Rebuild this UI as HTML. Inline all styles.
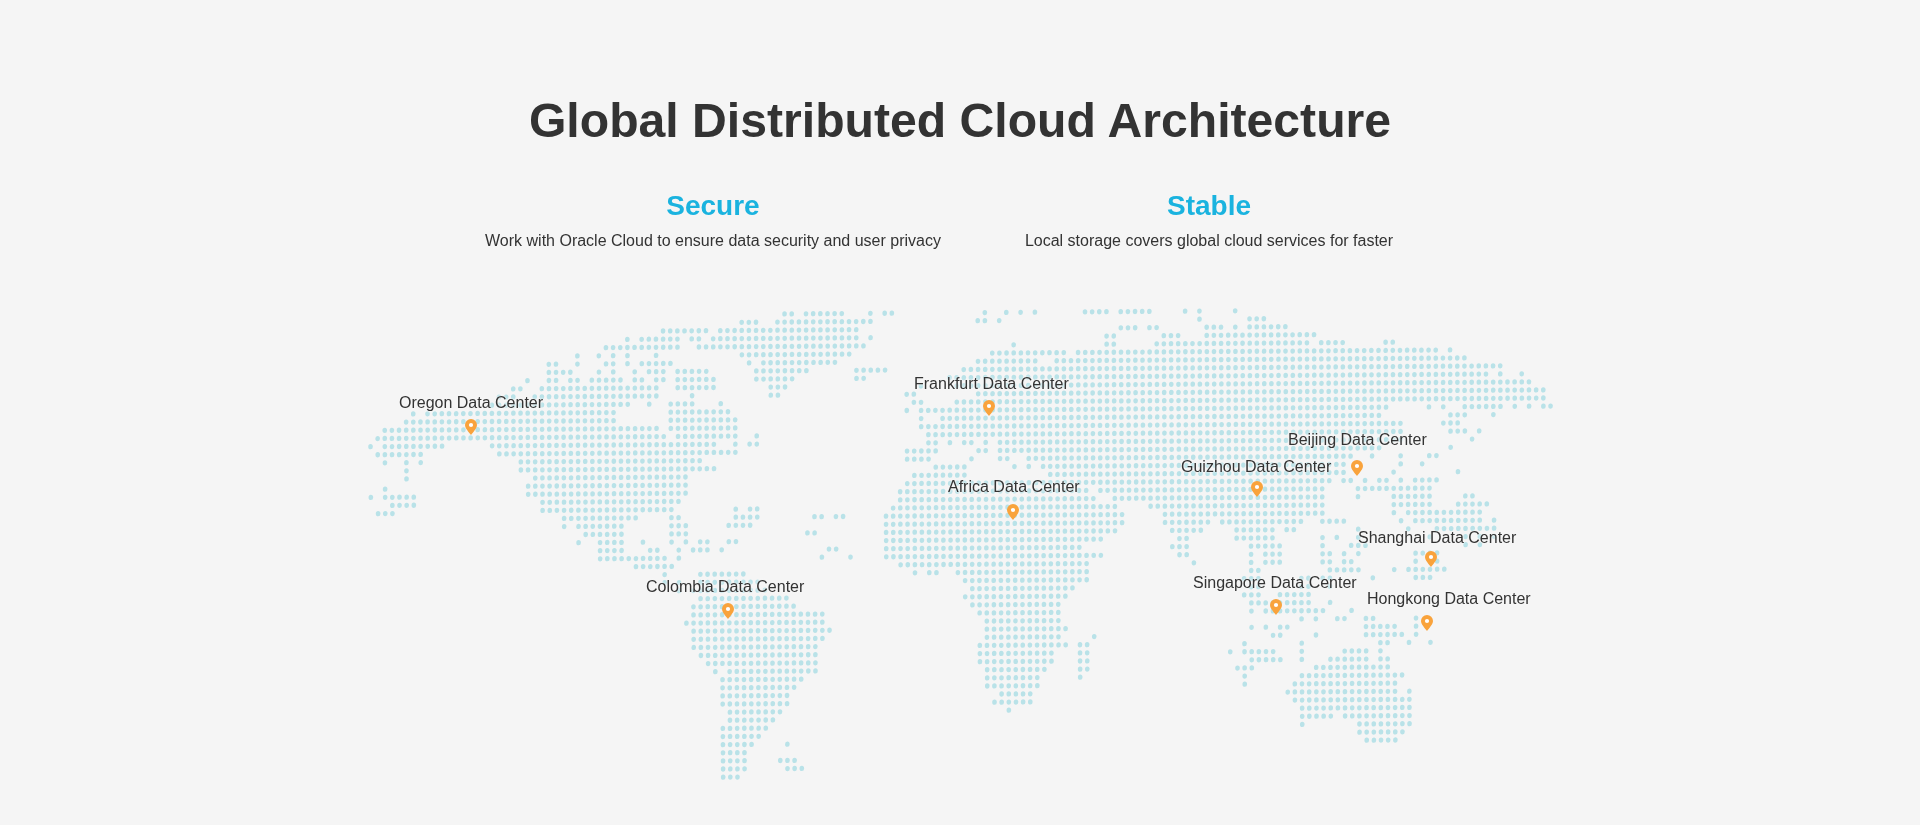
<!DOCTYPE html>
<html><head><meta charset="utf-8">
<style>
html,body{margin:0;padding:0;}
body{width:1920px;height:825px;background:#f5f5f5;position:relative;overflow:hidden;font-family:"Liberation Sans",sans-serif;}
h1{will-change:transform;position:absolute;left:0;width:1920px;top:90.2px;margin:0;text-align:center;font-size:48.15px;font-weight:bold;color:#333;line-height:60px;}
.sub{will-change:transform;position:absolute;text-align:center;width:600px;}
.sub h2{margin:0;font-size:28px;font-weight:bold;color:#1ab3df;line-height:34px;}
.sub p{margin:7px 0 0;font-size:16px;color:#333;line-height:22px;}
.map{position:absolute;left:0;top:0;}
.lbl{will-change:transform;position:absolute;font-size:16px;color:#333;white-space:nowrap;line-height:20px;text-shadow:0 0 2px #f5f5f5,0 0 3px #f5f5f5;}
.pin{position:absolute;}
</style></head><body>
<h1>Global Distributed Cloud Architecture</h1>
<div class="sub" style="left:413px;top:189px"><h2>Secure</h2><p>Work with Oracle Cloud to ensure data security and user privacy</p></div>
<div class="sub" style="left:909px;top:189px"><h2>Stable</h2><p>Local storage covers global cloud services for faster</p></div>
<svg class="map" width="1920" height="825" viewBox="0 0 1920 825"><g transform="matrix(7.1529 -0.0494 0.0525 8.1183 369.709 316.796)"><path d="M58 0h0M59 0h0M61 0h0M62 0h0M63 0h0M64 0h0M65 0h0M66 0h0M70 0h0M72 0h0M73 0h0M86 0h0M89 0h0M91 0h0M93 0h0M100 0h0M101 0h0M102 0h0M103 0h0M105 0h0M106 0h0M107 0h0M108 0h0M109 0h0M114 0h0M116 0h0M121 0h0M52 1h0M53 1h0M54 1h0M57 1h0M58 1h0M59 1h0M60 1h0M61 1h0M62 1h0M63 1h0M64 1h0M65 1h0M66 1h0M67 1h0M68 1h0M69 1h0M70 1h0M85 1h0M86 1h0M88 1h0M116 1h0M123 1h0M124 1h0M125 1h0M41 2h0M42 2h0M43 2h0M44 2h0M45 2h0M46 2h0M47 2h0M49 2h0M50 2h0M51 2h0M52 2h0M53 2h0M54 2h0M55 2h0M56 2h0M57 2h0M58 2h0M59 2h0M60 2h0M61 2h0M62 2h0M63 2h0M64 2h0M65 2h0M66 2h0M67 2h0M68 2h0M105 2h0M106 2h0M107 2h0M109 2h0M110 2h0M117 2h0M118 2h0M119 2h0M121 2h0M123 2h0M124 2h0M125 2h0M126 2h0M127 2h0M128 2h0M36 3h0M38 3h0M39 3h0M40 3h0M41 3h0M42 3h0M43 3h0M45 3h0M46 3h0M48 3h0M49 3h0M50 3h0M51 3h0M52 3h0M53 3h0M54 3h0M55 3h0M56 3h0M57 3h0M58 3h0M59 3h0M60 3h0M61 3h0M62 3h0M63 3h0M64 3h0M65 3h0M66 3h0M67 3h0M68 3h0M70 3h0M103 3h0M104 3h0M111 3h0M112 3h0M113 3h0M117 3h0M118 3h0M119 3h0M120 3h0M121 3h0M122 3h0M123 3h0M124 3h0M125 3h0M126 3h0M127 3h0M128 3h0M129 3h0M130 3h0M131 3h0M132 3h0M33 4h0M34 4h0M35 4h0M36 4h0M37 4h0M38 4h0M39 4h0M40 4h0M41 4h0M42 4h0M43 4h0M46 4h0M47 4h0M48 4h0M49 4h0M50 4h0M51 4h0M52 4h0M53 4h0M54 4h0M55 4h0M56 4h0M57 4h0M58 4h0M59 4h0M60 4h0M61 4h0M62 4h0M63 4h0M64 4h0M65 4h0M66 4h0M67 4h0M68 4h0M69 4h0M90 4h0M103 4h0M104 4h0M110 4h0M111 4h0M112 4h0M113 4h0M114 4h0M115 4h0M116 4h0M117 4h0M118 4h0M119 4h0M120 4h0M121 4h0M122 4h0M123 4h0M124 4h0M125 4h0M126 4h0M127 4h0M128 4h0M129 4h0M130 4h0M131 4h0M133 4h0M134 4h0M135 4h0M136 4h0M142 4h0M143 4h0M29 5h0M32 5h0M34 5h0M36 5h0M40 5h0M52 5h0M53 5h0M54 5h0M55 5h0M56 5h0M57 5h0M58 5h0M59 5h0M60 5h0M61 5h0M62 5h0M63 5h0M64 5h0M65 5h0M66 5h0M67 5h0M87 5h0M88 5h0M89 5h0M90 5h0M91 5h0M92 5h0M93 5h0M94 5h0M95 5h0M96 5h0M97 5h0M99 5h0M100 5h0M101 5h0M102 5h0M103 5h0M104 5h0M105 5h0M106 5h0M107 5h0M108 5h0M109 5h0M110 5h0M111 5h0M112 5h0M113 5h0M114 5h0M115 5h0M116 5h0M117 5h0M118 5h0M119 5h0M120 5h0M121 5h0M122 5h0M123 5h0M124 5h0M125 5h0M126 5h0M127 5h0M128 5h0M129 5h0M130 5h0M131 5h0M132 5h0M133 5h0M134 5h0M135 5h0M136 5h0M137 5h0M138 5h0M139 5h0M140 5h0M141 5h0M142 5h0M143 5h0M144 5h0M145 5h0M146 5h0M147 5h0M148 5h0M149 5h0M151 5h0M25 6h0M26 6h0M29 6h0M33 6h0M34 6h0M36 6h0M38 6h0M39 6h0M40 6h0M41 6h0M42 6h0M53 6h0M55 6h0M56 6h0M57 6h0M58 6h0M59 6h0M60 6h0M61 6h0M62 6h0M63 6h0M64 6h0M65 6h0M85 6h0M86 6h0M87 6h0M88 6h0M89 6h0M90 6h0M91 6h0M92 6h0M93 6h0M96 6h0M97 6h0M98 6h0M99 6h0M100 6h0M101 6h0M102 6h0M103 6h0M104 6h0M105 6h0M106 6h0M107 6h0M108 6h0M109 6h0M110 6h0M111 6h0M112 6h0M113 6h0M114 6h0M115 6h0M116 6h0M117 6h0M118 6h0M119 6h0M120 6h0M121 6h0M122 6h0M123 6h0M124 6h0M125 6h0M126 6h0M127 6h0M128 6h0M129 6h0M130 6h0M131 6h0M132 6h0M133 6h0M134 6h0M135 6h0M136 6h0M137 6h0M138 6h0M139 6h0M140 6h0M141 6h0M142 6h0M143 6h0M144 6h0M145 6h0M146 6h0M147 6h0M148 6h0M149 6h0M150 6h0M151 6h0M152 6h0M153 6h0M25 7h0M26 7h0M27 7h0M28 7h0M32 7h0M34 7h0M37 7h0M39 7h0M40 7h0M41 7h0M43 7h0M44 7h0M45 7h0M46 7h0M47 7h0M54 7h0M55 7h0M56 7h0M57 7h0M58 7h0M59 7h0M60 7h0M61 7h0M68 7h0M69 7h0M70 7h0M71 7h0M72 7h0M83 7h0M84 7h0M85 7h0M86 7h0M87 7h0M88 7h0M89 7h0M90 7h0M91 7h0M92 7h0M93 7h0M94 7h0M95 7h0M96 7h0M97 7h0M98 7h0M99 7h0M100 7h0M101 7h0M102 7h0M103 7h0M104 7h0M105 7h0M106 7h0M107 7h0M108 7h0M109 7h0M110 7h0M111 7h0M112 7h0M113 7h0M114 7h0M115 7h0M116 7h0M117 7h0M118 7h0M119 7h0M120 7h0M121 7h0M122 7h0M123 7h0M124 7h0M125 7h0M126 7h0M127 7h0M128 7h0M129 7h0M130 7h0M131 7h0M132 7h0M133 7h0M134 7h0M135 7h0M136 7h0M137 7h0M138 7h0M139 7h0M140 7h0M141 7h0M142 7h0M143 7h0M144 7h0M145 7h0M146 7h0M147 7h0M148 7h0M149 7h0M150 7h0M151 7h0M152 7h0M153 7h0M154 7h0M155 7h0M156 7h0M157 7h0M158 7h0M22 8h0M25 8h0M26 8h0M28 8h0M29 8h0M31 8h0M32 8h0M33 8h0M34 8h0M35 8h0M37 8h0M38 8h0M40 8h0M41 8h0M43 8h0M44 8h0M45 8h0M46 8h0M47 8h0M48 8h0M54 8h0M55 8h0M56 8h0M57 8h0M58 8h0M59 8h0M68 8h0M69 8h0M81 8h0M82 8h0M83 8h0M84 8h0M85 8h0M86 8h0M87 8h0M88 8h0M89 8h0M90 8h0M91 8h0M92 8h0M93 8h0M94 8h0M95 8h0M96 8h0M97 8h0M98 8h0M99 8h0M100 8h0M101 8h0M102 8h0M103 8h0M104 8h0M105 8h0M106 8h0M107 8h0M108 8h0M109 8h0M110 8h0M111 8h0M112 8h0M113 8h0M114 8h0M115 8h0M116 8h0M117 8h0M118 8h0M119 8h0M120 8h0M121 8h0M122 8h0M123 8h0M124 8h0M125 8h0M126 8h0M127 8h0M128 8h0M129 8h0M130 8h0M131 8h0M132 8h0M133 8h0M134 8h0M135 8h0M136 8h0M137 8h0M138 8h0M139 8h0M140 8h0M141 8h0M142 8h0M143 8h0M144 8h0M145 8h0M146 8h0M147 8h0M148 8h0M149 8h0M150 8h0M151 8h0M152 8h0M153 8h0M154 8h0M155 8h0M156 8h0M158 8h0M161 8h0M20 9h0M21 9h0M24 9h0M25 9h0M26 9h0M27 9h0M28 9h0M29 9h0M30 9h0M31 9h0M32 9h0M33 9h0M34 9h0M35 9h0M36 9h0M37 9h0M38 9h0M39 9h0M40 9h0M43 9h0M44 9h0M45 9h0M46 9h0M47 9h0M48 9h0M56 9h0M57 9h0M58 9h0M77 9h0M82 9h0M83 9h0M84 9h0M85 9h0M86 9h0M87 9h0M88 9h0M89 9h0M90 9h0M91 9h0M92 9h0M93 9h0M94 9h0M95 9h0M96 9h0M97 9h0M98 9h0M99 9h0M100 9h0M101 9h0M102 9h0M103 9h0M104 9h0M105 9h0M106 9h0M107 9h0M108 9h0M109 9h0M110 9h0M111 9h0M112 9h0M113 9h0M114 9h0M115 9h0M116 9h0M117 9h0M118 9h0M119 9h0M120 9h0M121 9h0M122 9h0M123 9h0M124 9h0M125 9h0M126 9h0M127 9h0M128 9h0M129 9h0M130 9h0M131 9h0M132 9h0M133 9h0M134 9h0M135 9h0M136 9h0M137 9h0M138 9h0M139 9h0M140 9h0M141 9h0M142 9h0M143 9h0M144 9h0M145 9h0M146 9h0M147 9h0M148 9h0M149 9h0M150 9h0M151 9h0M152 9h0M153 9h0M154 9h0M155 9h0M156 9h0M157 9h0M158 9h0M159 9h0M160 9h0M161 9h0M162 9h0M18 10h0M19 10h0M20 10h0M23 10h0M24 10h0M25 10h0M26 10h0M27 10h0M28 10h0M29 10h0M30 10h0M31 10h0M32 10h0M33 10h0M34 10h0M35 10h0M36 10h0M37 10h0M38 10h0M39 10h0M40 10h0M45 10h0M56 10h0M57 10h0M75 10h0M76 10h0M85 10h0M86 10h0M87 10h0M88 10h0M89 10h0M90 10h0M91 10h0M92 10h0M93 10h0M94 10h0M95 10h0M96 10h0M97 10h0M98 10h0M99 10h0M100 10h0M101 10h0M102 10h0M103 10h0M104 10h0M105 10h0M106 10h0M107 10h0M108 10h0M109 10h0M110 10h0M111 10h0M112 10h0M113 10h0M114 10h0M115 10h0M116 10h0M117 10h0M118 10h0M119 10h0M120 10h0M121 10h0M122 10h0M123 10h0M124 10h0M125 10h0M126 10h0M127 10h0M128 10h0M129 10h0M130 10h0M131 10h0M132 10h0M133 10h0M134 10h0M135 10h0M136 10h0M137 10h0M138 10h0M139 10h0M140 10h0M141 10h0M142 10h0M143 10h0M144 10h0M145 10h0M146 10h0M147 10h0M148 10h0M149 10h0M150 10h0M151 10h0M152 10h0M153 10h0M154 10h0M155 10h0M156 10h0M157 10h0M158 10h0M159 10h0M160 10h0M161 10h0M162 10h0M163 10h0M164 10h0M17 11h0M18 11h0M19 11h0M20 11h0M21 11h0M22 11h0M23 11h0M24 11h0M25 11h0M26 11h0M27 11h0M28 11h0M29 11h0M30 11h0M31 11h0M32 11h0M33 11h0M34 11h0M35 11h0M36 11h0M39 11h0M42 11h0M43 11h0M44 11h0M45 11h0M49 11h0M76 11h0M77 11h0M82 11h0M83 11h0M84 11h0M85 11h0M86 11h0M87 11h0M88 11h0M89 11h0M90 11h0M91 11h0M92 11h0M93 11h0M94 11h0M95 11h0M96 11h0M97 11h0M98 11h0M99 11h0M100 11h0M101 11h0M102 11h0M103 11h0M104 11h0M105 11h0M106 11h0M107 11h0M108 11h0M109 11h0M110 11h0M111 11h0M112 11h0M113 11h0M114 11h0M115 11h0M116 11h0M117 11h0M118 11h0M119 11h0M120 11h0M121 11h0M122 11h0M123 11h0M124 11h0M125 11h0M126 11h0M127 11h0M128 11h0M129 11h0M130 11h0M131 11h0M132 11h0M133 11h0M134 11h0M135 11h0M136 11h0M137 11h0M138 11h0M139 11h0M140 11h0M141 11h0M142 11h0M143 11h0M144 11h0M145 11h0M146 11h0M147 11h0M148 11h0M149 11h0M150 11h0M151 11h0M152 11h0M153 11h0M154 11h0M155 11h0M156 11h0M157 11h0M158 11h0M159 11h0M160 11h0M161 11h0M162 11h0M163 11h0M164 11h0M6 12h0M8 12h0M9 12h0M10 12h0M11 12h0M12 12h0M13 12h0M14 12h0M15 12h0M16 12h0M17 12h0M18 12h0M19 12h0M20 12h0M21 12h0M22 12h0M23 12h0M24 12h0M25 12h0M26 12h0M27 12h0M28 12h0M29 12h0M30 12h0M31 12h0M32 12h0M33 12h0M34 12h0M42 12h0M43 12h0M44 12h0M45 12h0M46 12h0M47 12h0M48 12h0M49 12h0M50 12h0M75 12h0M77 12h0M78 12h0M79 12h0M80 12h0M81 12h0M82 12h0M83 12h0M84 12h0M85 12h0M86 12h0M87 12h0M88 12h0M89 12h0M90 12h0M91 12h0M92 12h0M93 12h0M94 12h0M95 12h0M96 12h0M97 12h0M98 12h0M99 12h0M100 12h0M101 12h0M102 12h0M103 12h0M104 12h0M105 12h0M106 12h0M107 12h0M108 12h0M109 12h0M110 12h0M111 12h0M112 12h0M113 12h0M114 12h0M115 12h0M116 12h0M117 12h0M118 12h0M119 12h0M120 12h0M121 12h0M122 12h0M123 12h0M124 12h0M125 12h0M126 12h0M127 12h0M128 12h0M129 12h0M130 12h0M131 12h0M132 12h0M133 12h0M134 12h0M135 12h0M136 12h0M137 12h0M138 12h0M139 12h0M140 12h0M141 12h0M142 12h0M148 12h0M150 12h0M153 12h0M154 12h0M155 12h0M156 12h0M157 12h0M158 12h0M160 12h0M162 12h0M164 12h0M165 12h0M5 13h0M6 13h0M7 13h0M8 13h0M9 13h0M10 13h0M11 13h0M12 13h0M13 13h0M14 13h0M15 13h0M16 13h0M17 13h0M18 13h0M19 13h0M20 13h0M21 13h0M22 13h0M23 13h0M24 13h0M25 13h0M26 13h0M27 13h0M28 13h0M29 13h0M30 13h0M31 13h0M32 13h0M33 13h0M34 13h0M42 13h0M43 13h0M44 13h0M45 13h0M46 13h0M47 13h0M48 13h0M49 13h0M50 13h0M51 13h0M77 13h0M80 13h0M81 13h0M82 13h0M83 13h0M84 13h0M85 13h0M86 13h0M87 13h0M88 13h0M89 13h0M90 13h0M91 13h0M92 13h0M93 13h0M94 13h0M95 13h0M96 13h0M97 13h0M98 13h0M99 13h0M100 13h0M101 13h0M102 13h0M103 13h0M104 13h0M105 13h0M106 13h0M107 13h0M108 13h0M109 13h0M110 13h0M111 13h0M112 13h0M113 13h0M114 13h0M115 13h0M116 13h0M117 13h0M118 13h0M119 13h0M120 13h0M121 13h0M122 13h0M123 13h0M124 13h0M125 13h0M126 13h0M127 13h0M128 13h0M129 13h0M130 13h0M131 13h0M132 13h0M133 13h0M134 13h0M135 13h0M136 13h0M137 13h0M138 13h0M139 13h0M140 13h0M141 13h0M151 13h0M152 13h0M153 13h0M157 13h0M2 14h0M3 14h0M4 14h0M5 14h0M6 14h0M7 14h0M8 14h0M9 14h0M10 14h0M11 14h0M12 14h0M13 14h0M14 14h0M15 14h0M16 14h0M17 14h0M18 14h0M19 14h0M20 14h0M21 14h0M22 14h0M23 14h0M24 14h0M25 14h0M26 14h0M27 14h0M28 14h0M29 14h0M30 14h0M31 14h0M32 14h0M33 14h0M34 14h0M35 14h0M36 14h0M37 14h0M38 14h0M39 14h0M40 14h0M42 14h0M43 14h0M44 14h0M45 14h0M46 14h0M47 14h0M48 14h0M49 14h0M50 14h0M51 14h0M77 14h0M78 14h0M79 14h0M80 14h0M81 14h0M82 14h0M83 14h0M84 14h0M85 14h0M86 14h0M87 14h0M88 14h0M89 14h0M90 14h0M91 14h0M92 14h0M93 14h0M94 14h0M95 14h0M96 14h0M97 14h0M98 14h0M99 14h0M100 14h0M101 14h0M102 14h0M103 14h0M104 14h0M105 14h0M106 14h0M107 14h0M108 14h0M109 14h0M110 14h0M111 14h0M112 14h0M113 14h0M114 14h0M115 14h0M116 14h0M117 14h0M118 14h0M119 14h0M120 14h0M121 14h0M122 14h0M123 14h0M124 14h0M125 14h0M126 14h0M127 14h0M128 14h0M129 14h0M130 14h0M131 14h0M132 14h0M133 14h0M134 14h0M135 14h0M136 14h0M137 14h0M138 14h0M139 14h0M140 14h0M141 14h0M142 14h0M143 14h0M144 14h0M150 14h0M151 14h0M152 14h0M1 15h0M2 15h0M3 15h0M4 15h0M5 15h0M6 15h0M7 15h0M8 15h0M9 15h0M10 15h0M11 15h0M12 15h0M13 15h0M14 15h0M15 15h0M16 15h0M17 15h0M18 15h0M19 15h0M20 15h0M21 15h0M22 15h0M23 15h0M24 15h0M25 15h0M26 15h0M27 15h0M28 15h0M29 15h0M30 15h0M31 15h0M32 15h0M33 15h0M34 15h0M35 15h0M36 15h0M37 15h0M38 15h0M39 15h0M40 15h0M41 15h0M43 15h0M44 15h0M45 15h0M46 15h0M47 15h0M48 15h0M49 15h0M50 15h0M51 15h0M54 15h0M78 15h0M79 15h0M80 15h0M81 15h0M82 15h0M83 15h0M84 15h0M85 15h0M86 15h0M87 15h0M88 15h0M89 15h0M90 15h0M91 15h0M92 15h0M93 15h0M94 15h0M95 15h0M96 15h0M97 15h0M98 15h0M99 15h0M100 15h0M101 15h0M102 15h0M103 15h0M104 15h0M105 15h0M106 15h0M107 15h0M108 15h0M109 15h0M110 15h0M111 15h0M112 15h0M113 15h0M114 15h0M115 15h0M116 15h0M117 15h0M118 15h0M119 15h0M120 15h0M121 15h0M122 15h0M123 15h0M124 15h0M125 15h0M126 15h0M127 15h0M128 15h0M129 15h0M130 15h0M131 15h0M132 15h0M133 15h0M134 15h0M135 15h0M136 15h0M137 15h0M138 15h0M139 15h0M140 15h0M141 15h0M142 15h0M143 15h0M144 15h0M151 15h0M152 15h0M153 15h0M155 15h0M0 16h0M2 16h0M3 16h0M4 16h0M5 16h0M6 16h0M7 16h0M8 16h0M9 16h0M10 16h0M17 16h0M18 16h0M19 16h0M20 16h0M21 16h0M22 16h0M23 16h0M24 16h0M25 16h0M26 16h0M27 16h0M28 16h0M29 16h0M30 16h0M31 16h0M32 16h0M33 16h0M34 16h0M35 16h0M36 16h0M37 16h0M38 16h0M39 16h0M40 16h0M41 16h0M42 16h0M43 16h0M44 16h0M45 16h0M46 16h0M47 16h0M48 16h0M51 16h0M53 16h0M54 16h0M78 16h0M79 16h0M81 16h0M83 16h0M84 16h0M86 16h0M88 16h0M89 16h0M90 16h0M91 16h0M92 16h0M93 16h0M94 16h0M95 16h0M96 16h0M97 16h0M98 16h0M99 16h0M100 16h0M101 16h0M102 16h0M103 16h0M104 16h0M105 16h0M106 16h0M107 16h0M108 16h0M109 16h0M110 16h0M111 16h0M112 16h0M113 16h0M114 16h0M115 16h0M116 16h0M117 16h0M118 16h0M119 16h0M120 16h0M121 16h0M122 16h0M123 16h0M124 16h0M125 16h0M126 16h0M127 16h0M128 16h0M129 16h0M130 16h0M131 16h0M132 16h0M133 16h0M134 16h0M135 16h0M136 16h0M137 16h0M138 16h0M139 16h0M140 16h0M141 16h0M142 16h0M143 16h0M144 16h0M154 16h0M1 17h0M2 17h0M3 17h0M4 17h0M5 17h0M6 17h0M7 17h0M18 17h0M19 17h0M20 17h0M21 17h0M22 17h0M23 17h0M24 17h0M25 17h0M26 17h0M27 17h0M28 17h0M29 17h0M30 17h0M31 17h0M32 17h0M33 17h0M34 17h0M35 17h0M36 17h0M37 17h0M38 17h0M39 17h0M40 17h0M41 17h0M42 17h0M43 17h0M44 17h0M45 17h0M46 17h0M47 17h0M48 17h0M49 17h0M50 17h0M51 17h0M75 17h0M76 17h0M77 17h0M78 17h0M79 17h0M85 17h0M86 17h0M88 17h0M89 17h0M90 17h0M91 17h0M92 17h0M93 17h0M94 17h0M95 17h0M96 17h0M97 17h0M98 17h0M99 17h0M100 17h0M101 17h0M102 17h0M103 17h0M104 17h0M105 17h0M106 17h0M107 17h0M108 17h0M109 17h0M110 17h0M111 17h0M112 17h0M113 17h0M114 17h0M115 17h0M116 17h0M117 17h0M118 17h0M119 17h0M120 17h0M121 17h0M122 17h0M123 17h0M124 17h0M125 17h0M126 17h0M127 17h0M128 17h0M129 17h0M130 17h0M131 17h0M132 17h0M133 17h0M134 17h0M135 17h0M136 17h0M137 17h0M138 17h0M139 17h0M140 17h0M141 17h0M151 17h0M2 18h0M5 18h0M7 18h0M21 18h0M22 18h0M23 18h0M24 18h0M25 18h0M26 18h0M27 18h0M28 18h0M29 18h0M30 18h0M31 18h0M32 18h0M33 18h0M34 18h0M35 18h0M36 18h0M37 18h0M38 18h0M39 18h0M40 18h0M41 18h0M42 18h0M43 18h0M44 18h0M45 18h0M46 18h0M75 18h0M76 18h0M77 18h0M78 18h0M84 18h0M88 18h0M89 18h0M92 18h0M93 18h0M94 18h0M95 18h0M96 18h0M97 18h0M98 18h0M99 18h0M100 18h0M101 18h0M102 18h0M103 18h0M104 18h0M105 18h0M106 18h0M107 18h0M108 18h0M109 18h0M110 18h0M111 18h0M112 18h0M113 18h0M114 18h0M115 18h0M116 18h0M117 18h0M118 18h0M119 18h0M120 18h0M121 18h0M122 18h0M123 18h0M124 18h0M125 18h0M126 18h0M127 18h0M128 18h0M129 18h0M130 18h0M131 18h0M132 18h0M133 18h0M134 18h0M135 18h0M136 18h0M137 18h0M140 18h0M144 18h0M148 18h0M149 18h0M5 19h0M21 19h0M22 19h0M23 19h0M24 19h0M25 19h0M26 19h0M27 19h0M28 19h0M29 19h0M30 19h0M31 19h0M32 19h0M33 19h0M34 19h0M35 19h0M36 19h0M37 19h0M38 19h0M39 19h0M40 19h0M41 19h0M42 19h0M43 19h0M44 19h0M45 19h0M46 19h0M47 19h0M48 19h0M79 19h0M80 19h0M81 19h0M82 19h0M83 19h0M90 19h0M92 19h0M94 19h0M95 19h0M96 19h0M97 19h0M98 19h0M99 19h0M100 19h0M101 19h0M102 19h0M103 19h0M104 19h0M105 19h0M106 19h0M107 19h0M108 19h0M109 19h0M110 19h0M111 19h0M112 19h0M113 19h0M114 19h0M115 19h0M116 19h0M117 19h0M118 19h0M119 19h0M120 19h0M121 19h0M122 19h0M123 19h0M124 19h0M125 19h0M126 19h0M127 19h0M128 19h0M129 19h0M130 19h0M131 19h0M132 19h0M133 19h0M134 19h0M135 19h0M136 19h0M144 19h0M147 19h0M5 20h0M23 20h0M24 20h0M25 20h0M26 20h0M27 20h0M28 20h0M29 20h0M30 20h0M31 20h0M32 20h0M33 20h0M34 20h0M35 20h0M36 20h0M37 20h0M38 20h0M39 20h0M40 20h0M41 20h0M42 20h0M43 20h0M44 20h0M76 20h0M77 20h0M78 20h0M79 20h0M80 20h0M81 20h0M82 20h0M83 20h0M95 20h0M96 20h0M97 20h0M98 20h0M99 20h0M100 20h0M101 20h0M102 20h0M103 20h0M104 20h0M105 20h0M106 20h0M107 20h0M108 20h0M109 20h0M110 20h0M111 20h0M112 20h0M113 20h0M114 20h0M115 20h0M116 20h0M117 20h0M118 20h0M119 20h0M120 20h0M121 20h0M122 20h0M123 20h0M124 20h0M125 20h0M126 20h0M127 20h0M128 20h0M129 20h0M130 20h0M131 20h0M132 20h0M133 20h0M134 20h0M135 20h0M136 20h0M143 20h0M152 20h0M22 21h0M23 21h0M24 21h0M25 21h0M26 21h0M27 21h0M28 21h0M29 21h0M30 21h0M31 21h0M32 21h0M33 21h0M34 21h0M35 21h0M36 21h0M37 21h0M38 21h0M39 21h0M40 21h0M41 21h0M42 21h0M43 21h0M44 21h0M75 21h0M76 21h0M77 21h0M78 21h0M79 21h0M80 21h0M81 21h0M82 21h0M83 21h0M84 21h0M85 21h0M86 21h0M87 21h0M88 21h0M89 21h0M90 21h0M91 21h0M92 21h0M93 21h0M94 21h0M95 21h0M96 21h0M97 21h0M98 21h0M99 21h0M100 21h0M101 21h0M102 21h0M103 21h0M104 21h0M105 21h0M106 21h0M107 21h0M108 21h0M109 21h0M110 21h0M111 21h0M112 21h0M113 21h0M114 21h0M115 21h0M116 21h0M117 21h0M118 21h0M119 21h0M120 21h0M121 21h0M122 21h0M123 21h0M124 21h0M125 21h0M126 21h0M127 21h0M128 21h0M129 21h0M130 21h0M131 21h0M132 21h0M133 21h0M134 21h0M136 21h0M137 21h0M139 21h0M141 21h0M142 21h0M144 21h0M146 21h0M147 21h0M148 21h0M149 21h0M22 22h0M23 22h0M24 22h0M25 22h0M26 22h0M27 22h0M28 22h0M29 22h0M30 22h0M31 22h0M32 22h0M33 22h0M34 22h0M35 22h0M36 22h0M37 22h0M38 22h0M39 22h0M40 22h0M41 22h0M42 22h0M43 22h0M44 22h0M74 22h0M75 22h0M76 22h0M77 22h0M78 22h0M79 22h0M80 22h0M81 22h0M82 22h0M83 22h0M84 22h0M85 22h0M86 22h0M87 22h0M88 22h0M89 22h0M90 22h0M91 22h0M92 22h0M93 22h0M94 22h0M95 22h0M96 22h0M97 22h0M98 22h0M99 22h0M100 22h0M102 22h0M103 22h0M104 22h0M105 22h0M106 22h0M107 22h0M108 22h0M109 22h0M110 22h0M111 22h0M112 22h0M113 22h0M114 22h0M115 22h0M116 22h0M117 22h0M118 22h0M119 22h0M120 22h0M121 22h0M122 22h0M123 22h0M124 22h0M125 22h0M126 22h0M127 22h0M128 22h0M129 22h0M130 22h0M131 22h0M132 22h0M133 22h0M138 22h0M139 22h0M140 22h0M141 22h0M142 22h0M143 22h0M144 22h0M145 22h0M146 22h0M147 22h0M148 22h0M24 23h0M25 23h0M26 23h0M27 23h0M28 23h0M29 23h0M30 23h0M31 23h0M32 23h0M33 23h0M34 23h0M35 23h0M36 23h0M37 23h0M38 23h0M39 23h0M40 23h0M41 23h0M42 23h0M43 23h0M74 23h0M75 23h0M76 23h0M77 23h0M78 23h0M79 23h0M80 23h0M81 23h0M82 23h0M83 23h0M84 23h0M85 23h0M86 23h0M87 23h0M88 23h0M89 23h0M90 23h0M91 23h0M92 23h0M93 23h0M94 23h0M95 23h0M96 23h0M97 23h0M98 23h0M99 23h0M100 23h0M101 23h0M104 23h0M105 23h0M106 23h0M107 23h0M108 23h0M109 23h0M110 23h0M111 23h0M112 23h0M113 23h0M114 23h0M115 23h0M116 23h0M117 23h0M118 23h0M119 23h0M120 23h0M121 23h0M122 23h0M123 23h0M124 23h0M125 23h0M126 23h0M127 23h0M128 23h0M129 23h0M130 23h0M131 23h0M132 23h0M133 23h0M138 23h0M143 23h0M144 23h0M145 23h0M146 23h0M147 23h0M148 23h0M153 23h0M154 23h0M24 24h0M25 24h0M26 24h0M27 24h0M28 24h0M29 24h0M30 24h0M31 24h0M32 24h0M33 24h0M34 24h0M35 24h0M36 24h0M37 24h0M38 24h0M39 24h0M40 24h0M41 24h0M42 24h0M51 24h0M53 24h0M54 24h0M73 24h0M74 24h0M75 24h0M76 24h0M77 24h0M78 24h0M79 24h0M80 24h0M81 24h0M82 24h0M83 24h0M84 24h0M85 24h0M86 24h0M87 24h0M88 24h0M89 24h0M90 24h0M91 24h0M92 24h0M93 24h0M94 24h0M95 24h0M96 24h0M97 24h0M98 24h0M99 24h0M100 24h0M101 24h0M102 24h0M103 24h0M104 24h0M109 24h0M110 24h0M111 24h0M112 24h0M113 24h0M114 24h0M115 24h0M116 24h0M117 24h0M118 24h0M119 24h0M120 24h0M121 24h0M122 24h0M123 24h0M124 24h0M125 24h0M126 24h0M127 24h0M128 24h0M129 24h0M130 24h0M131 24h0M132 24h0M133 24h0M143 24h0M144 24h0M145 24h0M146 24h0M147 24h0M148 24h0M152 24h0M153 24h0M154 24h0M155 24h0M156 24h0M27 25h0M28 25h0M29 25h0M30 25h0M31 25h0M32 25h0M33 25h0M34 25h0M35 25h0M36 25h0M37 25h0M42 25h0M43 25h0M51 25h0M52 25h0M53 25h0M54 25h0M62 25h0M63 25h0M65 25h0M66 25h0M72 25h0M73 25h0M74 25h0M75 25h0M76 25h0M77 25h0M78 25h0M79 25h0M80 25h0M81 25h0M82 25h0M83 25h0M84 25h0M85 25h0M86 25h0M87 25h0M88 25h0M89 25h0M90 25h0M91 25h0M92 25h0M93 25h0M94 25h0M95 25h0M96 25h0M97 25h0M98 25h0M99 25h0M100 25h0M101 25h0M102 25h0M103 25h0M104 25h0M105 25h0M111 25h0M112 25h0M113 25h0M114 25h0M115 25h0M116 25h0M117 25h0M118 25h0M119 25h0M120 25h0M121 25h0M122 25h0M123 25h0M124 25h0M125 25h0M126 25h0M127 25h0M128 25h0M129 25h0M130 25h0M131 25h0M132 25h0M133 25h0M143 25h0M145 25h0M146 25h0M147 25h0M148 25h0M149 25h0M150 25h0M151 25h0M152 25h0M153 25h0M154 25h0M155 25h0M27 26h0M29 26h0M30 26h0M31 26h0M32 26h0M33 26h0M34 26h0M35 26h0M42 26h0M43 26h0M44 26h0M50 26h0M51 26h0M52 26h0M53 26h0M72 26h0M73 26h0M74 26h0M75 26h0M76 26h0M77 26h0M78 26h0M79 26h0M80 26h0M81 26h0M82 26h0M83 26h0M84 26h0M85 26h0M86 26h0M87 26h0M88 26h0M89 26h0M90 26h0M91 26h0M92 26h0M93 26h0M94 26h0M95 26h0M96 26h0M97 26h0M98 26h0M99 26h0M100 26h0M101 26h0M102 26h0M103 26h0M104 26h0M105 26h0M111 26h0M112 26h0M113 26h0M114 26h0M115 26h0M116 26h0M117 26h0M119 26h0M120 26h0M121 26h0M122 26h0M123 26h0M124 26h0M125 26h0M126 26h0M127 26h0M128 26h0M129 26h0M130 26h0M133 26h0M134 26h0M135 26h0M136 26h0M144 26h0M146 26h0M147 26h0M148 26h0M149 26h0M150 26h0M151 26h0M152 26h0M153 26h0M154 26h0M155 26h0M157 26h0M30 27h0M31 27h0M32 27h0M33 27h0M34 27h0M35 27h0M42 27h0M43 27h0M44 27h0M61 27h0M62 27h0M72 27h0M73 27h0M74 27h0M75 27h0M76 27h0M77 27h0M78 27h0M79 27h0M80 27h0M81 27h0M82 27h0M83 27h0M84 27h0M85 27h0M86 27h0M87 27h0M88 27h0M89 27h0M90 27h0M91 27h0M92 27h0M93 27h0M94 27h0M95 27h0M96 27h0M97 27h0M98 27h0M99 27h0M100 27h0M101 27h0M102 27h0M103 27h0M104 27h0M112 27h0M113 27h0M114 27h0M115 27h0M116 27h0M121 27h0M122 27h0M123 27h0M124 27h0M125 27h0M126 27h0M128 27h0M129 27h0M138 27h0M145 27h0M149 27h0M150 27h0M151 27h0M152 27h0M153 27h0M154 27h0M155 27h0M156 27h0M157 27h0M29 28h0M32 28h0M33 28h0M34 28h0M35 28h0M38 28h0M42 28h0M44 28h0M46 28h0M47 28h0M50 28h0M51 28h0M72 28h0M73 28h0M74 28h0M75 28h0M76 28h0M77 28h0M78 28h0M79 28h0M80 28h0M81 28h0M82 28h0M83 28h0M84 28h0M85 28h0M86 28h0M87 28h0M88 28h0M89 28h0M90 28h0M91 28h0M92 28h0M93 28h0M94 28h0M95 28h0M96 28h0M97 28h0M98 28h0M99 28h0M100 28h0M101 28h0M102 28h0M113 28h0M114 28h0M121 28h0M122 28h0M123 28h0M124 28h0M125 28h0M126 28h0M133 28h0M135 28h0M138 28h0M148 28h0M153 28h0M155 28h0M157 28h0M32 29h0M33 29h0M34 29h0M35 29h0M39 29h0M40 29h0M43 29h0M45 29h0M46 29h0M47 29h0M49 29h0M64 29h0M65 29h0M72 29h0M73 29h0M74 29h0M75 29h0M76 29h0M77 29h0M78 29h0M79 29h0M80 29h0M81 29h0M82 29h0M83 29h0M84 29h0M85 29h0M86 29h0M87 29h0M88 29h0M89 29h0M90 29h0M91 29h0M92 29h0M93 29h0M94 29h0M95 29h0M96 29h0M97 29h0M98 29h0M99 29h0M112 29h0M113 29h0M114 29h0M123 29h0M124 29h0M125 29h0M126 29h0M127 29h0M133 29h0M137 29h0M138 29h0M139 29h0M153 29h0M155 29h0M32 30h0M33 30h0M34 30h0M35 30h0M36 30h0M37 30h0M38 30h0M39 30h0M40 30h0M41 30h0M43 30h0M63 30h0M67 30h0M72 30h0M73 30h0M74 30h0M75 30h0M76 30h0M77 30h0M78 30h0M79 30h0M80 30h0M81 30h0M82 30h0M83 30h0M84 30h0M85 30h0M86 30h0M87 30h0M88 30h0M89 30h0M90 30h0M91 30h0M92 30h0M93 30h0M94 30h0M95 30h0M96 30h0M97 30h0M98 30h0M99 30h0M100 30h0M101 30h0M102 30h0M113 30h0M114 30h0M123 30h0M125 30h0M126 30h0M127 30h0M133 30h0M134 30h0M136 30h0M138 30h0M146 30h0M147 30h0M148 30h0M149 30h0M37 31h0M38 31h0M39 31h0M40 31h0M41 31h0M42 31h0M74 31h0M75 31h0M76 31h0M77 31h0M78 31h0M79 31h0M80 31h0M81 31h0M82 31h0M83 31h0M84 31h0M85 31h0M86 31h0M87 31h0M88 31h0M89 31h0M90 31h0M91 31h0M92 31h0M93 31h0M94 31h0M95 31h0M96 31h0M97 31h0M98 31h0M99 31h0M100 31h0M115 31h0M123 31h0M125 31h0M126 31h0M127 31h0M133 31h0M134 31h0M136 31h0M137 31h0M146 31h0M148 31h0M149 31h0M41 32h0M46 32h0M47 32h0M48 32h0M49 32h0M50 32h0M51 32h0M52 32h0M76 32h0M78 32h0M79 32h0M82 32h0M83 32h0M84 32h0M85 32h0M86 32h0M87 32h0M88 32h0M89 32h0M90 32h0M91 32h0M92 32h0M93 32h0M94 32h0M95 32h0M96 32h0M97 32h0M98 32h0M99 32h0M100 32h0M123 32h0M124 32h0M134 32h0M135 32h0M136 32h0M137 32h0M138 32h0M143 32h0M145 32h0M146 32h0M147 32h0M148 32h0M149 32h0M150 32h0M41 33h0M43 33h0M46 33h0M47 33h0M48 33h0M49 33h0M50 33h0M51 33h0M52 33h0M53 33h0M54 33h0M83 33h0M84 33h0M85 33h0M86 33h0M87 33h0M88 33h0M89 33h0M90 33h0M91 33h0M92 33h0M93 33h0M94 33h0M95 33h0M96 33h0M97 33h0M98 33h0M99 33h0M100 33h0M122 33h0M123 33h0M124 33h0M130 33h0M131 33h0M133 33h0M134 33h0M140 33h0M146 33h0M147 33h0M148 33h0M43 34h0M45 34h0M46 34h0M47 34h0M48 34h0M49 34h0M50 34h0M51 34h0M52 34h0M53 34h0M54 34h0M55 34h0M84 34h0M85 34h0M86 34h0M87 34h0M88 34h0M89 34h0M90 34h0M91 34h0M92 34h0M93 34h0M94 34h0M95 34h0M96 34h0M97 34h0M98 34h0M123 34h0M124 34h0M130 34h0M131 34h0M134 34h0M46 35h0M47 35h0M48 35h0M49 35h0M50 35h0M51 35h0M52 35h0M53 35h0M54 35h0M55 35h0M56 35h0M57 35h0M58 35h0M83 35h0M84 35h0M85 35h0M86 35h0M87 35h0M88 35h0M89 35h0M90 35h0M91 35h0M92 35h0M93 35h0M94 35h0M95 35h0M96 35h0M97 35h0M122 35h0M123 35h0M124 35h0M127 35h0M128 35h0M129 35h0M130 35h0M131 35h0M45 36h0M46 36h0M47 36h0M48 36h0M49 36h0M50 36h0M51 36h0M52 36h0M53 36h0M54 36h0M55 36h0M56 36h0M57 36h0M58 36h0M59 36h0M84 36h0M85 36h0M86 36h0M87 36h0M88 36h0M89 36h0M90 36h0M91 36h0M92 36h0M93 36h0M94 36h0M95 36h0M96 36h0M123 36h0M124 36h0M125 36h0M126 36h0M127 36h0M128 36h0M129 36h0M130 36h0M131 36h0M134 36h0M45 37h0M46 37h0M47 37h0M48 37h0M49 37h0M50 37h0M51 37h0M52 37h0M53 37h0M54 37h0M55 37h0M56 37h0M57 37h0M58 37h0M59 37h0M60 37h0M61 37h0M62 37h0M63 37h0M85 37h0M86 37h0M87 37h0M88 37h0M89 37h0M90 37h0M91 37h0M92 37h0M93 37h0M94 37h0M95 37h0M96 37h0M123 37h0M125 37h0M126 37h0M127 37h0M128 37h0M129 37h0M130 37h0M131 37h0M132 37h0M133 37h0M137 37h0M44 38h0M45 38h0M46 38h0M47 38h0M48 38h0M49 38h0M50 38h0M51 38h0M52 38h0M53 38h0M54 38h0M55 38h0M56 38h0M57 38h0M58 38h0M59 38h0M60 38h0M61 38h0M62 38h0M63 38h0M86 38h0M87 38h0M88 38h0M89 38h0M90 38h0M91 38h0M92 38h0M93 38h0M94 38h0M95 38h0M96 38h0M130 38h0M132 38h0M135 38h0M136 38h0M139 38h0M140 38h0M146 38h0M45 39h0M46 39h0M47 39h0M48 39h0M49 39h0M50 39h0M51 39h0M52 39h0M53 39h0M54 39h0M55 39h0M56 39h0M57 39h0M58 39h0M59 39h0M60 39h0M61 39h0M62 39h0M63 39h0M64 39h0M86 39h0M87 39h0M88 39h0M89 39h0M90 39h0M91 39h0M92 39h0M93 39h0M94 39h0M95 39h0M96 39h0M97 39h0M123 39h0M125 39h0M127 39h0M128 39h0M139 39h0M140 39h0M141 39h0M142 39h0M143 39h0M146 39h0M45 40h0M46 40h0M47 40h0M48 40h0M49 40h0M50 40h0M51 40h0M52 40h0M53 40h0M54 40h0M55 40h0M56 40h0M57 40h0M58 40h0M59 40h0M60 40h0M61 40h0M62 40h0M63 40h0M86 40h0M87 40h0M88 40h0M89 40h0M90 40h0M91 40h0M92 40h0M93 40h0M94 40h0M95 40h0M96 40h0M101 40h0M126 40h0M127 40h0M132 40h0M139 40h0M140 40h0M141 40h0M142 40h0M143 40h0M144 40h0M146 40h0M45 41h0M46 41h0M47 41h0M48 41h0M49 41h0M50 41h0M51 41h0M52 41h0M53 41h0M54 41h0M55 41h0M56 41h0M57 41h0M58 41h0M59 41h0M60 41h0M61 41h0M62 41h0M85 41h0M86 41h0M87 41h0M88 41h0M89 41h0M90 41h0M91 41h0M92 41h0M93 41h0M94 41h0M95 41h0M96 41h0M97 41h0M99 41h0M100 41h0M122 41h0M130 41h0M141 41h0M142 41h0M145 41h0M148 41h0M46 42h0M47 42h0M48 42h0M49 42h0M50 42h0M51 42h0M52 42h0M53 42h0M54 42h0M55 42h0M56 42h0M57 42h0M58 42h0M59 42h0M60 42h0M61 42h0M62 42h0M85 42h0M86 42h0M87 42h0M88 42h0M89 42h0M90 42h0M91 42h0M92 42h0M93 42h0M94 42h0M95 42h0M99 42h0M100 42h0M120 42h0M122 42h0M123 42h0M124 42h0M125 42h0M126 42h0M130 42h0M136 42h0M137 42h0M138 42h0M139 42h0M141 42h0M47 43h0M48 43h0M49 43h0M50 43h0M51 43h0M52 43h0M53 43h0M54 43h0M55 43h0M56 43h0M57 43h0M58 43h0M59 43h0M60 43h0M61 43h0M62 43h0M85 43h0M86 43h0M87 43h0M88 43h0M89 43h0M90 43h0M91 43h0M92 43h0M93 43h0M94 43h0M95 43h0M99 43h0M100 43h0M123 43h0M124 43h0M125 43h0M126 43h0M127 43h0M130 43h0M134 43h0M135 43h0M136 43h0M137 43h0M138 43h0M139 43h0M141 43h0M142 43h0M48 44h0M50 44h0M51 44h0M52 44h0M53 44h0M54 44h0M55 44h0M56 44h0M57 44h0M58 44h0M59 44h0M60 44h0M61 44h0M62 44h0M86 44h0M87 44h0M88 44h0M89 44h0M90 44h0M91 44h0M92 44h0M93 44h0M94 44h0M99 44h0M100 44h0M121 44h0M122 44h0M123 44h0M132 44h0M133 44h0M134 44h0M135 44h0M136 44h0M137 44h0M138 44h0M139 44h0M140 44h0M141 44h0M142 44h0M49 45h0M50 45h0M51 45h0M52 45h0M53 45h0M54 45h0M55 45h0M56 45h0M57 45h0M58 45h0M59 45h0M60 45h0M86 45h0M87 45h0M88 45h0M89 45h0M90 45h0M91 45h0M92 45h0M93 45h0M99 45h0M122 45h0M130 45h0M131 45h0M132 45h0M133 45h0M134 45h0M135 45h0M136 45h0M137 45h0M138 45h0M139 45h0M140 45h0M141 45h0M142 45h0M143 45h0M144 45h0M49 46h0M50 46h0M51 46h0M52 46h0M53 46h0M54 46h0M55 46h0M56 46h0M57 46h0M58 46h0M59 46h0M86 46h0M87 46h0M88 46h0M89 46h0M90 46h0M91 46h0M92 46h0M93 46h0M122 46h0M129 46h0M130 46h0M131 46h0M132 46h0M133 46h0M134 46h0M135 46h0M136 46h0M137 46h0M138 46h0M139 46h0M140 46h0M141 46h0M142 46h0M143 46h0M49 47h0M50 47h0M51 47h0M52 47h0M53 47h0M54 47h0M55 47h0M56 47h0M57 47h0M58 47h0M88 47h0M89 47h0M90 47h0M91 47h0M92 47h0M128 47h0M129 47h0M130 47h0M131 47h0M132 47h0M133 47h0M134 47h0M135 47h0M136 47h0M137 47h0M138 47h0M139 47h0M140 47h0M141 47h0M142 47h0M143 47h0M145 47h0M49 48h0M50 48h0M51 48h0M52 48h0M53 48h0M54 48h0M55 48h0M56 48h0M57 48h0M58 48h0M87 48h0M88 48h0M89 48h0M90 48h0M91 48h0M92 48h0M129 48h0M130 48h0M131 48h0M132 48h0M133 48h0M134 48h0M135 48h0M136 48h0M137 48h0M138 48h0M139 48h0M140 48h0M141 48h0M142 48h0M143 48h0M144 48h0M145 48h0M50 49h0M51 49h0M52 49h0M53 49h0M54 49h0M55 49h0M56 49h0M57 49h0M89 49h0M130 49h0M131 49h0M132 49h0M133 49h0M134 49h0M135 49h0M136 49h0M137 49h0M138 49h0M139 49h0M140 49h0M141 49h0M142 49h0M143 49h0M144 49h0M145 49h0M50 50h0M51 50h0M52 50h0M53 50h0M54 50h0M55 50h0M56 50h0M130 50h0M131 50h0M132 50h0M133 50h0M134 50h0M136 50h0M137 50h0M138 50h0M139 50h0M140 50h0M141 50h0M142 50h0M143 50h0M144 50h0M145 50h0M49 51h0M50 51h0M51 51h0M52 51h0M53 51h0M54 51h0M55 51h0M130 51h0M138 51h0M139 51h0M140 51h0M141 51h0M142 51h0M143 51h0M144 51h0M145 51h0M49 52h0M50 52h0M51 52h0M52 52h0M53 52h0M54 52h0M138 52h0M139 52h0M140 52h0M141 52h0M142 52h0M143 52h0M144 52h0M49 53h0M50 53h0M51 53h0M52 53h0M53 53h0M58 53h0M139 53h0M140 53h0M141 53h0M142 53h0M143 53h0M49 54h0M50 54h0M51 54h0M52 54h0M49 55h0M50 55h0M51 55h0M52 55h0M57 55h0M58 55h0M59 55h0M49 56h0M50 56h0M51 56h0M52 56h0M58 56h0M59 56h0M60 56h0M49 57h0M50 57h0M51 57h0M0 22.25h0M1 24.25h0M2 21.25h0M2 22.25h0M2 24.25h0M3 22.25h0M3 23.25h0M3 24.25h0M4 22.25h0M4 23.25h0M5 22.25h0M5 23.25h0M6 22.25h0M6 23.25h0" stroke="#b9e2e8" stroke-width="0.65" stroke-linecap="round" fill="none"/></g></svg>
<div class="lbl" style="left:399.0px;top:393.0px">Oregon Data Center</div>
<div class="lbl" style="left:914.2px;top:374.3px">Frankfurt Data Center</div>
<div class="lbl" style="left:1288.0px;top:429.9px">Beijing Data Center</div>
<div class="lbl" style="left:1181.1px;top:457.4px">Guizhou Data Center</div>
<div class="lbl" style="left:947.7px;top:477.1px">Africa Data Center</div>
<div class="lbl" style="left:1357.7px;top:527.5px">Shanghai Data Center</div>
<div class="lbl" style="left:1192.7px;top:572.5px">Singapore Data Center</div>
<div class="lbl" style="left:1367.1px;top:588.8px">Hongkong Data Center</div>
<div class="lbl" style="left:645.9px;top:577.2px">Colombia Data Center</div>
<svg class="pin" style="left:465px;top:419px" width="12" height="16" viewBox="0 0 12 16"><path d="M6 16C4.2 13.6 0 9.4 0 6A6 6 0 0 1 12 6C12 9.4 7.8 13.6 6 16Z" fill="#f9a33c"/><circle cx="6" cy="6" r="2.1" fill="#fff"/></svg>
<svg class="pin" style="left:983px;top:400px" width="12" height="16" viewBox="0 0 12 16"><path d="M6 16C4.2 13.6 0 9.4 0 6A6 6 0 0 1 12 6C12 9.4 7.8 13.6 6 16Z" fill="#f9a33c"/><circle cx="6" cy="6" r="2.1" fill="#fff"/></svg>
<svg class="pin" style="left:1351px;top:460px" width="12" height="16" viewBox="0 0 12 16"><path d="M6 16C4.2 13.6 0 9.4 0 6A6 6 0 0 1 12 6C12 9.4 7.8 13.6 6 16Z" fill="#f9a33c"/><circle cx="6" cy="6" r="2.1" fill="#fff"/></svg>
<svg class="pin" style="left:1251px;top:481px" width="12" height="16" viewBox="0 0 12 16"><path d="M6 16C4.2 13.6 0 9.4 0 6A6 6 0 0 1 12 6C12 9.4 7.8 13.6 6 16Z" fill="#f9a33c"/><circle cx="6" cy="6" r="2.1" fill="#fff"/></svg>
<svg class="pin" style="left:1007px;top:504px" width="12" height="16" viewBox="0 0 12 16"><path d="M6 16C4.2 13.6 0 9.4 0 6A6 6 0 0 1 12 6C12 9.4 7.8 13.6 6 16Z" fill="#f9a33c"/><circle cx="6" cy="6" r="2.1" fill="#fff"/></svg>
<svg class="pin" style="left:1425px;top:551px" width="12" height="16" viewBox="0 0 12 16"><path d="M6 16C4.2 13.6 0 9.4 0 6A6 6 0 0 1 12 6C12 9.4 7.8 13.6 6 16Z" fill="#f9a33c"/><circle cx="6" cy="6" r="2.1" fill="#fff"/></svg>
<svg class="pin" style="left:1270px;top:599px" width="12" height="16" viewBox="0 0 12 16"><path d="M6 16C4.2 13.6 0 9.4 0 6A6 6 0 0 1 12 6C12 9.4 7.8 13.6 6 16Z" fill="#f9a33c"/><circle cx="6" cy="6" r="2.1" fill="#fff"/></svg>
<svg class="pin" style="left:1421px;top:615px" width="12" height="16" viewBox="0 0 12 16"><path d="M6 16C4.2 13.6 0 9.4 0 6A6 6 0 0 1 12 6C12 9.4 7.8 13.6 6 16Z" fill="#f9a33c"/><circle cx="6" cy="6" r="2.1" fill="#fff"/></svg>
<svg class="pin" style="left:722px;top:603px" width="12" height="16" viewBox="0 0 12 16"><path d="M6 16C4.2 13.6 0 9.4 0 6A6 6 0 0 1 12 6C12 9.4 7.8 13.6 6 16Z" fill="#f9a33c"/><circle cx="6" cy="6" r="2.1" fill="#fff"/></svg>
</body></html>
